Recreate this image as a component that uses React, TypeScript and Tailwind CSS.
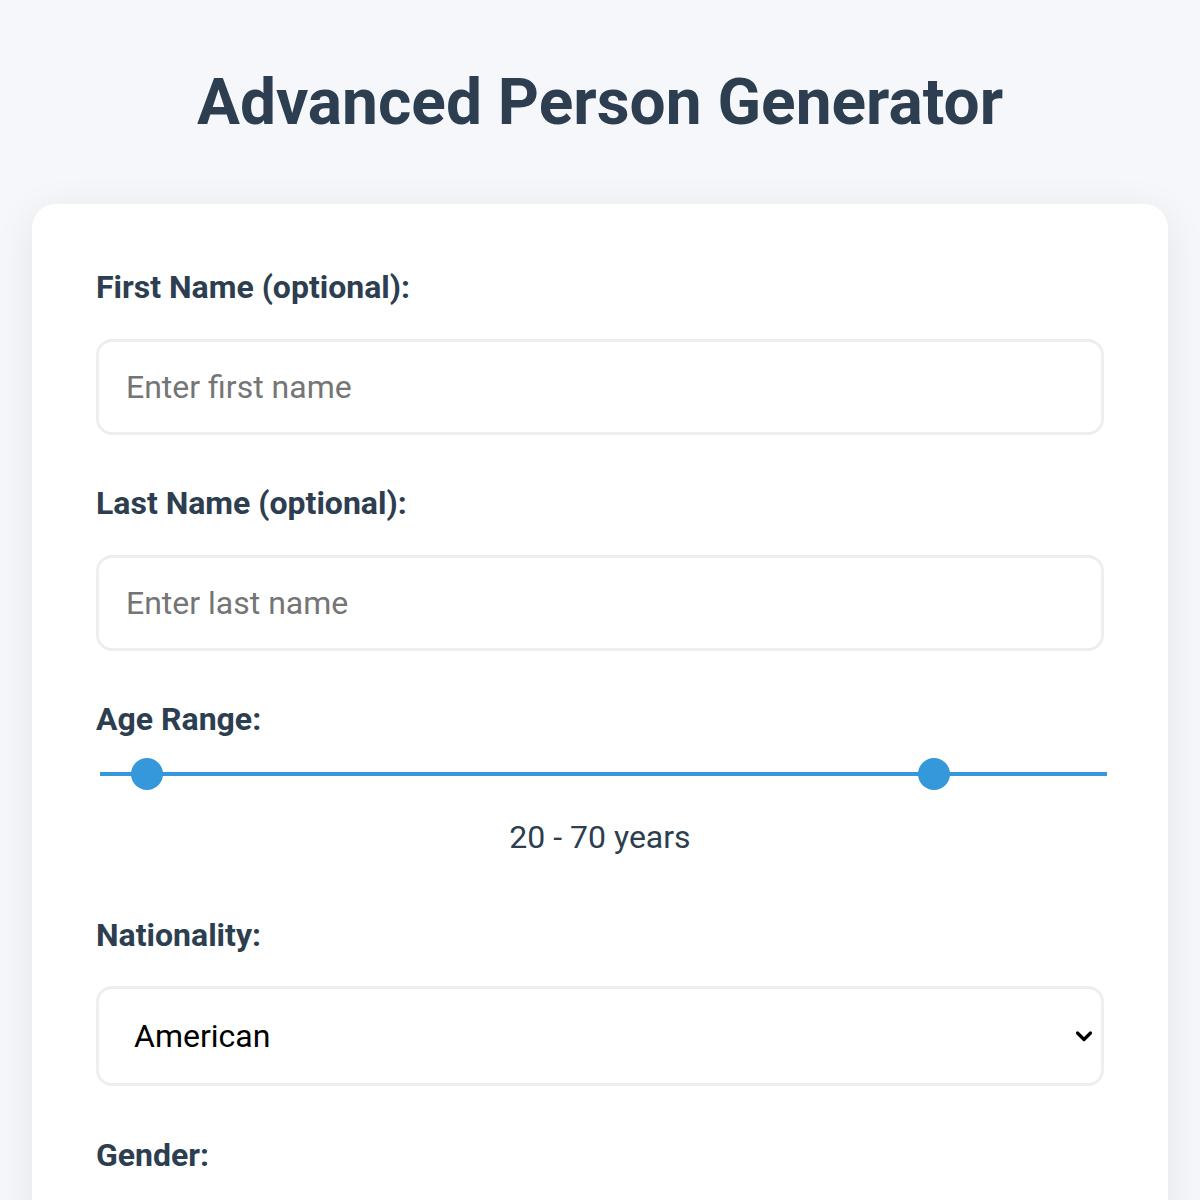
import { useState } from 'react';

const MIN_AGE = 18;
const MAX_AGE = 80;
const THUMB = 32;

function AgeRange({ from, to }: { from: number; to: number }) {
  // thumbs travel inside the track, minus their own width
  const pos = (v: number) => `calc(${THUMB / 2}px + (100% - ${THUMB}px) * ${(v - MIN_AGE) / (MAX_AGE - MIN_AGE)})`;
  return (
    <div>
      <div className="relative h-[32px] ml-[4px] -mr-[3px] mt-[20px]">
        <div className="absolute left-0 right-0 top-[14px] h-[4px] bg-[#3498db]" />
        {[from, to].map((v) => (
          <div
            key={v}
            className="absolute top-0 w-[32px] h-[32px] -ml-[16px] rounded-full bg-[#3498db]"
            style={{ left: pos(v) }}
          />
        ))}
      </div>
      <div className="mt-[28px] text-center text-[32px] leading-[38px] text-[#2c3e50]">
        {from} - {to} years
      </div>
    </div>
  );
}

function Label({ children }: { children: React.ReactNode }) {
  return <label className="block text-[32px] leading-[38px] font-bold text-[#2c3e50]">{children}</label>;
}

const inputCls =
  'mt-[33px] block w-full h-[96px] rounded-[16px] border-[3px] border-[#eeeeee] px-[27px] text-[32px] text-[#333] placeholder:text-[#757575] outline-none';

export default function App() {
  const [first, setFirst] = useState('');
  const [last, setLast] = useState('');
  const [nation, setNation] = useState('American');

  return (
    <div className="min-h-screen bg-[#f5f7fa] px-[32px] pt-[65px] pb-[60px] font-['Roboto',sans-serif]">
      <h1 className="text-center text-[64px] leading-[76px] font-bold text-[#2c3e50]">Advanced Person Generator</h1>

      <div className="mt-[63px] rounded-[24px] bg-white px-[64px] pt-[64px] pb-[64px] shadow-[0_8px_40px_rgba(0,0,0,0.08)]">
        <Label>First Name (optional):</Label>
        <input value={first} onChange={(e) => setFirst(e.target.value)} placeholder="Enter first name" className={inputCls} />

        <div className="mt-[49px]">
          <Label>Last Name (optional):</Label>
        </div>
        <input value={last} onChange={(e) => setLast(e.target.value)} placeholder="Enter last name" className={inputCls} />

        <div className="mt-[49px]">
          <Label>Age Range:</Label>
        </div>
        <AgeRange from={20} to={70} />

        <div className="mt-[60px]">
          <Label>Nationality:</Label>
        </div>
        <div className="relative mt-[32px]">
          <select
            value={nation}
            onChange={(e) => setNation(e.target.value)}
            className="block w-full h-[100px] appearance-none rounded-[16px] border-[3px] border-[#eeeeee] bg-white pl-[35px] pr-[60px] text-[32px] text-black outline-none"
          >
            <option>American</option>
            <option>British</option>
            <option>Canadian</option>
            <option>French</option>
            <option>German</option>
          </select>
          <svg
            className="pointer-events-none absolute right-[11px] top-1/2 -translate-y-1/2"
            width="18"
            height="12"
            viewBox="0 0 18 12"
            fill="none"
          >
            <path d="M2.5 3l6.5 6.5 6.5-6.5" stroke="#000" strokeWidth="3.2" strokeLinecap="round" strokeLinejoin="round" />
          </svg>
        </div>

        <div className="mt-[50px]">
          <Label>Gender:</Label>
        </div>
        <div className="mt-[33px] h-[96px]" />
      </div>
    </div>
  );
}
